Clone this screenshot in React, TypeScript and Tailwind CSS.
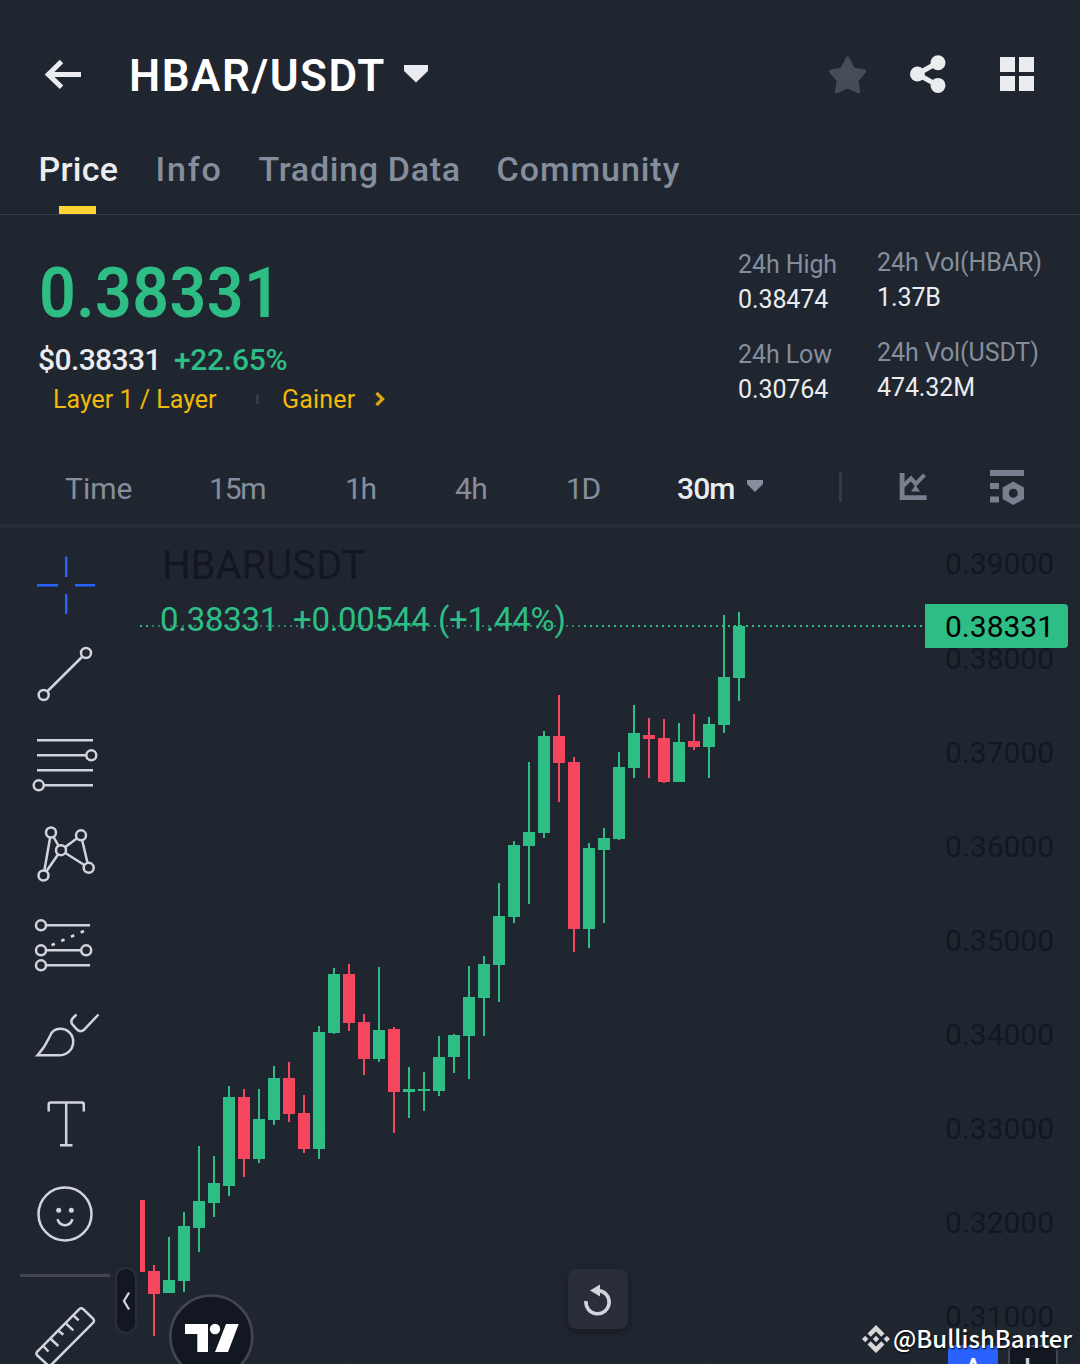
import { ReactNode } from 'react';

type Candle = [up: boolean, high: number, low: number, top: number, bottom: number];

// high / low are the wick ends, top / bottom the body, all in chart pixels
const candles: Candle[] = [
  [false, 1265, 1336, 1271, 1294],
  [true, 1237, 1293, 1280, 1293],
  [true, 1212, 1292, 1226, 1281],
  [true, 1146, 1252, 1201, 1228],
  [true, 1156, 1217, 1183, 1203],
  [true, 1086, 1196, 1097, 1186],
  [false, 1089, 1177, 1097, 1159],
  [true, 1089, 1163, 1119, 1159],
  [true, 1066, 1125, 1078, 1120],
  [false, 1062, 1122, 1078, 1114],
  [false, 1095, 1153, 1113, 1149],
  [true, 1026, 1159, 1032, 1149],
  [true, 968, 1034, 974, 1033],
  [false, 964, 1031, 974, 1023],
  [false, 1014, 1075, 1022, 1059],
  [true, 967, 1062, 1030, 1059],
  [false, 1027, 1133, 1029, 1092],
  [true, 1067, 1118, 1089, 1092],
  [true, 1072, 1111, 1089, 1091],
  [true, 1036, 1096, 1057, 1091],
  [true, 1034, 1073, 1035, 1057],
  [true, 966, 1079, 997, 1036],
  [true, 956, 1036, 964, 998],
  [true, 883, 1002, 916, 965],
  [true, 841, 923, 845, 917],
  [true, 762, 904, 832, 846],
  [true, 731, 838, 736, 833],
  [false, 695, 802, 736, 763],
  [false, 757, 952, 762, 929],
  [true, 843, 948, 848, 929],
  [true, 828, 923, 838, 850],
  [true, 752, 840, 767, 839],
  [true, 705, 778, 733, 768],
  [false, 718, 778, 735, 739],
  [false, 719, 783, 738, 782],
  [true, 723, 782, 742, 782],
  [false, 714, 750, 741, 747],
  [true, 717, 778, 724, 747],
  [true, 615, 733, 677, 725],
  [true, 612, 701, 626, 678],
];

const prices = ['0.39000', '0.38000', '0.37000', '0.36000', '0.35000', '0.34000', '0.33000', '0.32000', '0.31000'];

const UP = '#2ebd85';
const DOWN = '#f6465d';

function Header() {
  return (
    <header className="flex h-[136px] items-start pt-[49px]">
      <svg className="ml-11 mt-[10px] h-8 w-[38px] shrink-0" viewBox="44 59 38 32" fill="none" stroke="#eaecef" strokeWidth="5">
        <path d="M81 74.4H48M61.5 61.5L48.3 74.4L61.5 87.3" />
      </svg>
      <h1 className="ml-[47px] w-[270px] whitespace-nowrap text-[44px] font-semibold leading-[54px] tracking-[1.5px] text-white">
        HBAR/USDT
      </h1>
      <svg className="ml-[5px] mt-[15px] h-5 w-6 shrink-0" viewBox="404 64 24 20" fill="#eaecef">
        <path d="M404 65H428V71L416 82.5L404 71Z" />
      </svg>
      <svg className="ml-[400px] mt-[5px] h-10 w-10 shrink-0" viewBox="828 54 40 40" fill="#474d57" stroke="#474d57" strokeWidth="3" strokeLinejoin="round">
        <path d="M847.6 57.8L853.3 69L864.8 71.3L857 80.5L858.6 92L847.6 87L836.6 92L838.2 80.5L830.4 71.3L841.9 69Z" />
      </svg>
      <svg className="ml-[41px] mt-[5px] h-10 w-10 shrink-0" viewBox="909 54 40 40" fill="#eaecef">
        <path d="M937.5 62.7L917.4 74L937.5 85.4" fill="none" stroke="#eaecef" strokeWidth="5" />
        <circle cx="938" cy="62.7" r="7.5" />
        <circle cx="938" cy="85.4" r="7.5" />
        <circle cx="917.4" cy="74" r="7.4" />
      </svg>
      <div className="ml-[51px] mt-2 grid grid-cols-[15px_15px] grid-rows-[15px_15px] gap-1">
        <i className="bg-[#eaecef]" />
        <i className="bg-[#eaecef]" />
        <i className="bg-[#eaecef]" />
        <i className="bg-[#eaecef]" />
      </div>
    </header>
  );
}

function Tabs() {
  return (
    <nav className="flex h-[79px] border-b border-[#333b47] pl-[38.5px] text-[34px] font-medium leading-[66px] text-[#848e9c]">
      <div className="w-[116px] tracking-[0.3px] text-[#eaecef]">
        Price
        <div className="ml-[20.5px] mt-1 h-2 w-[37px] bg-[#fcd535]" />
      </div>
      <div className="w-[104px] pl-px tracking-[1.8px]">Info</div>
      <div className="w-[238px] tracking-[0.7px]">Trading Data</div>
      <div className="tracking-[0.95px]">Community</div>
    </nav>
  );
}

function Stat({ label, value }: { label: string; value: string }) {
  return (
    <div className="h-[90px] whitespace-nowrap text-[25px] leading-[35px] tracking-[-0.1px]">
      <div className="text-[#848e9c]">{label}</div>
      <div className="text-[#eaecef]">{value}</div>
    </div>
  );
}

function Summary() {
  return (
    <section className="flex h-[236px]">
      <div className="w-[738px] pl-[39px] pt-[43px]">
        <div className="origin-left scale-x-[0.92] text-[70px] font-semibold leading-[70px] tracking-[0.5px] text-[#2ebd85]">
          0.38331
        </div>
        <div className="mt-[14px] flex text-[30px] font-medium leading-9">
          <span className="-ml-px w-[136px] tracking-[-0.6px] text-[#eaecef]">$0.38331</span>
          <span className="tracking-[-0.3px] text-[#2ebd85]">+22.65%</span>
        </div>
        <div className="mt-1 flex h-9 items-center pl-[14px] text-[25px] text-[#f0b90b]">
          <span className="w-[203px]">Layer 1 / Layer</span>
          <i className="mb-[2px] h-[10px] w-[3px] bg-[#333b47]" />
          <span className="ml-[23px] w-[93px] tracking-[0.2px]">Gainer</span>
          <svg className="mb-[2px] h-4 w-[10px]" viewBox="0 0 10 16" fill="none" stroke="#d9a70d" strokeWidth="3.2">
            <path d="M1.5 2L7.6 8L1.5 14" />
          </svg>
        </div>
      </div>
      <div className="w-[139px] pt-8">
        <Stat label="24h High" value="0.38474" />
        <Stat label="24h Low" value="0.30764" />
      </div>
      <div className="pt-[30px]">
        <Stat label="24h Vol(HBAR)" value="1.37B" />
        <Stat label="24h Vol(USDT)" value="474.32M" />
      </div>
    </section>
  );
}

function Intervals() {
  return (
    <div className="flex h-[77px] items-center border-b-4 border-[#272d38] pb-px pl-[65px] text-[30px] text-[#848e9c]">
      <span className="w-[144px] pt-[2px]">Time</span>
      <span className="w-[136px] pt-[2px] tracking-[-1.2px]">15m</span>
      <span className="w-[110px] pt-[2px] tracking-[-1.4px]">1h</span>
      <span className="w-[111px] pt-[2px] tracking-[-0.7px]">4h</span>
      <span className="w-[111px] pt-[2px] tracking-[-1.4px]">1D</span>
      <span className="w-[70px] pt-[2px] font-medium tracking-[-0.9px] text-[#eaecef]">30m</span>
      <svg className="mb-[3px] h-3 w-4" viewBox="0 0 16 12" fill="#848e9c">
        <path d="M0 0H16V4L8 12L0 4Z" />
      </svg>
      <i className="ml-[76px] h-[30px] w-[3px] bg-[#333b47]" />
      <svg className="ml-[57px] h-9 w-[30px]" viewBox="899 469 30 36" fill="none" stroke="#76808f" strokeWidth="4.8">
        <path d="M902.1 473V497.6H926.7" />
        <path d="M902 487L911 478.5L915.7 484L924.5 474.8" strokeWidth="4" />
        <path d="M915.5 485L920 491.5H911Z" fill="#76808f" stroke="none" />
      </svg>
      <svg className="ml-[60px] h-9 w-9" viewBox="989 469 36 36" fill="#76808f">
        <path d="M990 470H1024V476H990ZM990 483H999V489H990ZM990 496.5H999V502.5H990Z" />
        <path fillRule="evenodd" d="M1013.3 481.5L1024 487.5V499L1013.3 505L1002.6 499V487.5ZM1013.3 488.7A4.5 4.5 0 1 0 1013.3 497.7A4.5 4.5 0 1 0 1013.3 488.7Z" />
      </svg>
    </div>
  );
}

function Tool({ children }: { children: ReactNode }) {
  return (
    <svg className="h-[90px] w-[130px] shrink-0" viewBox="0 0 130 90" fill="none" stroke="#d1d4dc" strokeWidth="2.5">
      {children}
    </svg>
  );
}

function Dot({ x, y }: { x: number; y: number }) {
  return <circle cx={x} cy={y} r="5" fill="#202630" />;
}

function Toolbar() {
  return (
    <aside className="flex w-[140px] shrink-0 flex-col pt-3">
      <Tool>
        <path d="M66.2 16.5V37M66.2 54V74M37 45.3H58M75 45.3H95" stroke="#2962ff" />
      </Tool>
      <Tool>
        <path d="M43.7 65L86 23" />
        <Dot x={43.7} y={65} />
        <Dot x={86} y={23} />
      </Tool>
      <Tool>
        <path d="M37 20.2H93M37 35.3H91M37 50.3H93M39 65.3H93" />
        <Dot x={91.3} y={35.3} />
        <Dot x={38.7} y={65.3} />
      </Tool>
      <Tool>
        <path d="M51 22.5L61 40.2L88.7 57.8L81 25.3L61 40.2L43.5 65.5Z" />
        <Dot x={51} y={22.5} />
        <Dot x={81} y={25.3} />
        <Dot x={61} y={40.2} />
        <Dot x={43.5} y={65.5} />
        <Dot x={88.7} y={57.8} />
      </Tool>
      <Tool>
        <path d="M41 25.3H90M41 50.3H86M41 65.3H90" />
        <path d="M51.5 45.2L86 30.2" strokeWidth="2.8" strokeDasharray="3.6 7" />
        <Dot x={41} y={25.3} />
        <Dot x={41} y={50.3} />
        <Dot x={86.2} y={50.3} />
        <Dot x={41} y={65.3} />
      </Tool>
      <Tool>
        <path d="M37.5 65.3C46 56 48 50 50 46C52 41 56 38.8 60 38.8C68 38.8 73.2 44.5 73.2 51.5C73.2 60 66.5 65.3 59 65.3Z" />
        <path d="M76.5 24.5L73 28Q70 31 72.3 34.3L77 39.5Q80.5 42.7 84 39.8L98.5 24.5" />
      </Tool>
      <Tool>
        <path d="M48.7 31.5V24.5Q48.7 22.5 50.7 22.5H81.8Q83.8 22.5 83.8 24.5V31.5M66.2 22.5V65.3M60 65.3H72.5" />
      </Tool>
      <Tool>
        <circle cx="65" cy="44" r="26.5" />
        <circle cx="58.7" cy="40.2" r="2.5" fill="#d1d4dc" stroke="none" />
        <circle cx="71.3" cy="40.2" r="2.5" fill="#d1d4dc" stroke="none" />
        <path d="M57.5 49.2C60 57.2 70 57.2 72.5 49.2" />
      </Tool>
      <i className="ml-5 mt-[14px] h-[3px] w-[90px] shrink-0 bg-[#434651]" />
      <svg className="h-[90px] w-[130px] shrink-0" viewBox="0 1277 130 90" fill="none" stroke="#d1d4dc" strokeWidth="2.5">
        <path d="M51 1368L37.3 1355.5Q35.5 1353.5 37.3 1351.5L79 1309.3Q81.3 1307.2 83.5 1309.3L93 1318.5Q95 1320.8 93 1323L49 1367" />
        <path d="M43.3 1346L48.5 1351.5M50.3 1338.5L58.3 1346M57.5 1330L63.3 1334.7M65 1322.7L73.3 1330.3M73 1315L78.7 1320.3" />
      </svg>
    </aside>
  );
}

function CandleChart() {
  return (
    <svg className="h-[836px] w-[785px] shrink-0" viewBox="140 528 785 836" shapeRendering="crispEdges">
      {prices.map((price, i) => (
        <rect key={price} x="140" y={564 + Math.round(i * 94.1)} width="778" height="1" fill="#222832" />
      ))}
      <path d="M348.5 528V1364M707.5 528V1364M918.5 528V1364" stroke="#222832" />
      <path d="M140 626H925" stroke={UP} strokeWidth="2" strokeDasharray="2 4" />
      <rect x="140" y="1200" width="5" height="72" fill={DOWN} />
      {candles.map(([up, high, low, top, bottom], i) => (
        <g key={i} fill={up ? UP : DOWN}>
          <rect x={153 + i * 15} y={high} width="2" height={low - high} />
          <rect x={148 + i * 15} y={top} width="12" height={bottom - top} />
        </g>
      ))}
    </svg>
  );
}

function Legend() {
  return (
    <div className="absolute left-[150px] top-[13px] w-[432px] whitespace-nowrap">
      <div className="pl-3 text-[40px] leading-[50px] text-[#131722]">HBARUSDT</div>
      <div className="mt-2 flex bg-[#202630]/40 pl-[10px] text-[33px] leading-[42px] tracking-[-0.3px] text-[#2ebd85]">
        <span className="w-[133px]">0.38331</span>
        <span className="w-[145px]">+0.00544</span>
        <span>(+1.44%)</span>
      </div>
    </div>
  );
}

function PriceAxis() {
  return (
    <div className="w-[155px] shrink-0 pl-5 pt-[18.4px] text-[30px] leading-9 text-[#131722]">
      {prices.map((price) => (
        <div key={price} className="h-[94.12px]">{price}</div>
      ))}
    </div>
  );
}

function Watermark() {
  return (
    <div className="absolute bottom-[6px] left-[862px] flex items-center whitespace-nowrap font-['Noto_Sans_CJK_SC',sans-serif] text-[24px] font-medium leading-9 text-white [text-shadow:1px_1px_2px_#000]">
      <svg className="mr-[3px] h-7 w-7 shrink-0" viewBox="0 0 28 28" fill="#d8d8d8">
        <path d="M14 0L22.5 8.5L19.3 11.7L14 6.4L8.7 11.7L5.5 8.5ZM14 28L22.5 19.5L19.3 16.3L14 21.6L8.7 16.3L5.5 19.5ZM14 10.8L17.2 14L14 17.2L10.8 14ZM3.2 10.8L6.4 14L3.2 17.2L0 14ZM24.8 10.8L28 14L24.8 17.2L21.6 14Z" />
      </svg>
      <span className="pb-[2px]">@BullishBanter</span>
    </div>
  );
}

function Chart() {
  return (
    <main className="relative flex h-[836px] overflow-hidden">
      <Toolbar />
      <CandleChart />
      <PriceAxis />
      <Legend />
      <div className="absolute left-[925px] top-[76px] h-11 w-[143px] rounded-r bg-[#2ebd85] pl-5 text-[30px] leading-[45px] text-black">
        0.38331
      </div>
      <button className="absolute left-[115px] top-[739px] flex h-[67px] w-[22px] items-center justify-center rounded-[11px] border-2 border-[#2a2e39] bg-[#131722]">
        <svg className="h-5 w-2 shrink-0" viewBox="0 0 8 20" fill="none" stroke="#d1d4dc" strokeWidth="2.3">
          <path d="M7 1.5L2 10L7 18.5" />
        </svg>
      </button>
      <svg className="absolute left-[168px] top-[766px] h-[86px] w-[86px]" viewBox="168 1294 86 86" fill="#fff">
        <circle cx="211.3" cy="1336.5" r="41" fill="#131722" stroke="#434651" strokeWidth="2.6" />
        <path d="M185 1324H208V1352H197.3V1334H185Z" />
        <circle cx="215" cy="1329" r="5.2" />
        <path d="M226 1324H238.7L228 1352H215Z" />
      </svg>
      <button className="absolute left-[568px] top-[741px] h-[60px] w-[60px] rounded-lg bg-[#2a2e39] shadow-[0_4px_8px_rgba(0,0,0,0.35)]">
        <svg className="h-[60px] w-[60px]" viewBox="568 1269 60 60">
          <path d="M586 1301A11.6 11.6 0 1 0 598.5 1290.6" fill="none" stroke="#d1d4dc" strokeWidth="3.6" />
          <path d="M590 1290.5L600 1284.5V1296.5Z" fill="#d1d4dc" />
        </svg>
      </button>
      <div className="absolute left-[948px] top-[817px] flex gap-[10px] text-center text-[26px] font-medium leading-[46px] text-[#d1d4dc]">
        <div className="h-12 w-[50px] rounded-md bg-[#2962ff] text-white">A</div>
        <div className="h-12 w-[50px] rounded-md border-2 border-[#434651] bg-[#131722] pr-1 leading-[42px]">L</div>
      </div>
      <Watermark />
    </main>
  );
}

export default function App() {
  return (
    <div className="h-[1364px] w-[1080px] overflow-hidden bg-[#202630] font-['Roboto',sans-serif]">
      <Header />
      <Tabs />
      <Summary />
      <Intervals />
      <Chart />
    </div>
  );
}
